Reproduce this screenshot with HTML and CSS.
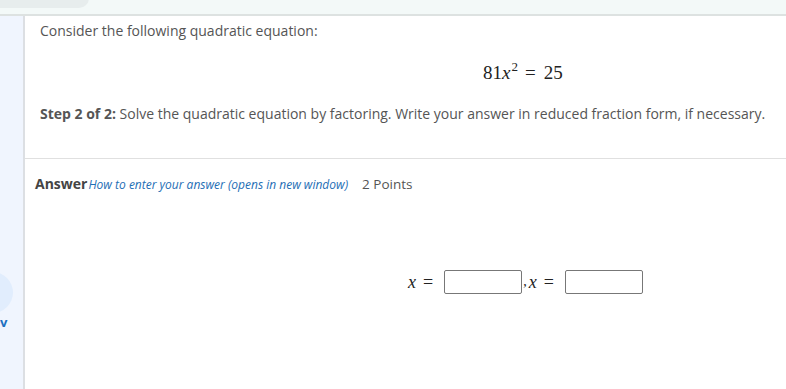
FILE: index.html
```html
<!DOCTYPE html>
<html>
<head>
<meta charset="utf-8">
<link rel="stylesheet" href="styles.css">
</head>
<body>
<div class="topbar"><div class="tab"></div></div>
<div class="layout">
  <aside class="sidebar">
    <div class="circle"></div>
    <div class="side-letter">v</div>
  </aside>
  <main class="main">
    <section class="question">
      <p class="intro">Consider the following quadratic equation:</p>
      <div class="equation"><span class="num">81</span><span class="var">x</span><sup>2</sup><span class="eq">=</span><span class="num">25</span></div>
      <p class="step"><b>Step 2 of 2:</b> Solve the quadratic equation by factoring. Write your answer in reduced fraction form, if necessary.</p>
    </section>
    <section class="answer">
      <div class="answer-head"><span class="answer-label">Answer</span><a class="howto">How to enter your answer (opens in new window)</a><span class="points">2 Points</span></div>
      <div class="inputs">
        <span class="var">x</span><span class="eq">=</span><span class="box"></span>
        <span class="comma">,</span><span class="var">x</span><span class="eq">=</span><span class="box"></span>
      </div>
    </section>
  </main>
</div>
</body>
</html>
```
FILE: styles.css
```css
html, body { margin: 0; padding: 0; }
body {
  width: 786px; height: 389px; overflow: hidden;
  font-family: "Open Sans", "Liberation Sans", sans-serif;
  color: #555;
  background: #fff;
}
.topbar {
  height: 14px;
  background: #f3f9f8;
  border-bottom: 2px solid #dde2e1;
  position: relative;
}
.tab {
  position: absolute; left: 0; top: -12px;
  width: 89px; height: 20px;
  background: #e7eded;
  border-radius: 0 0 10px 0;
}
.layout { display: flex; height: 373px; }
.sidebar {
  width: 23px; flex: none;
  background: #f0f5fe;
  border-right: 2px solid #dcdfe3;
  position: relative; overflow: hidden;
}
.circle {
  position: absolute; left: -28px; top: 256px;
  width: 41px; height: 41px; border-radius: 50%;
  background: #e1edfd;
}
.side-letter {
  position: absolute; left: 0; top: 297px;
  font-weight: 700; font-size: 13px; color: #1d6fc0;
}
.main { flex: 1; }
.question { padding: 5px 0 0 15px; height: 137px; border-bottom: 1px solid #e0e0e0; }
.intro { margin: 0; font-size: 14px; line-height: 20px; }
.equation {
  margin: 21px 0 0 443px;
  font-family: "Liberation Serif", "DejaVu Serif", serif;
  font-size: 19px; color: #222; line-height: 22px;
}
.equation sup { font-size: 13px; vertical-align: 8px; line-height: 0; margin-left: 1px; }
.equation .eq { margin: 0 8px 0 7px; }
.var { font-style: italic; font-family: "Liberation Serif", serif; }
.step { margin: 20px 0 0 0; font-size: 14px; line-height: 20px; }
.step b { font-weight: 700; }
.answer { padding: 15px 0 0 10px; }
.answer-head { display: flex; align-items: baseline; }
.answer-label { font-weight: 700; font-size: 14px; color: #444; }
.howto { font-style: italic; font-size: 12px; color: #1e6eb5; margin-left: 1px; }
.points { font-size: 13.5px; margin-left: 14px; }
.inputs {
  display: flex; align-items: center;
  margin: 77px 0 0 373px;
  font-family: "Liberation Serif", serif; font-size: 18px; color: #222;
}
.inputs .eq { margin: 0 11px 0 7px; }
.box {
  width: 76px; height: 22px;
  border: 1px solid #777; border-radius: 2px;
}
.comma { margin-left: 1px; margin-right: 2px; font-size: 14px; }
```
